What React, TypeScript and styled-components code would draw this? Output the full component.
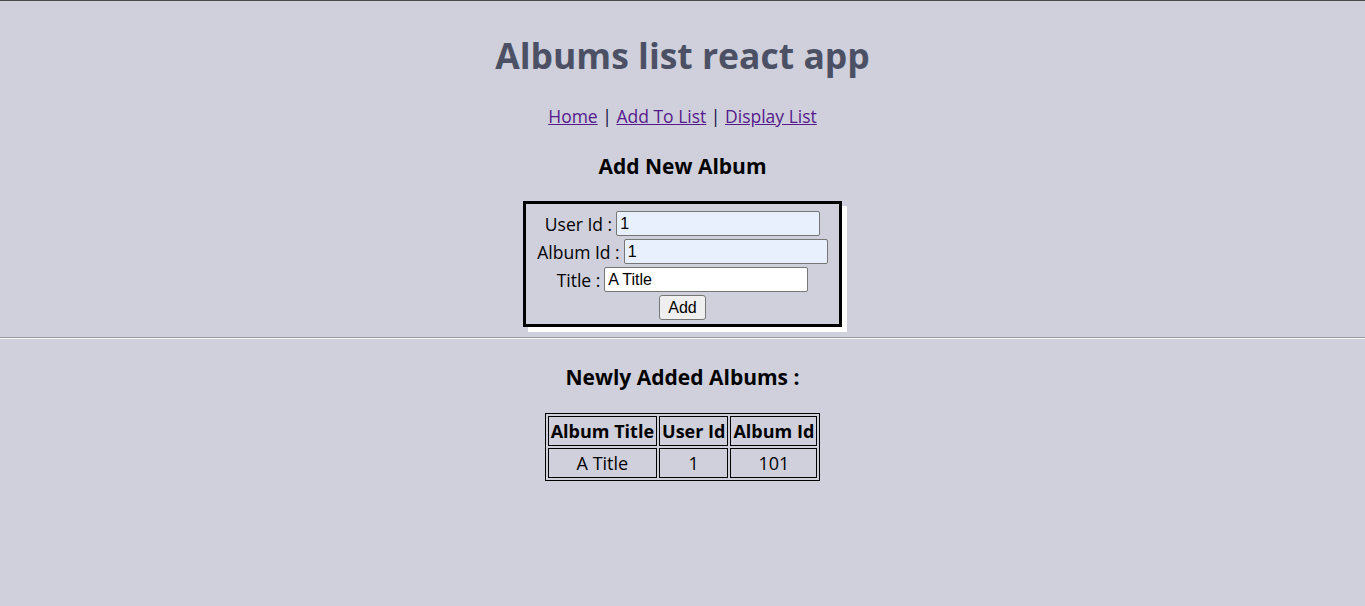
import styled, { createGlobalStyle } from 'styled-components';

const GlobalStyle = createGlobalStyle`
  html, body {
    margin: 0;
    padding: 0;
    background: #cfd0dc;
  }
  body {
    font-family: "Open Sans", "Noto Sans", sans-serif;
    color: #000;
  }
`;

const Page = styled.div`
  min-height: 606px;
  box-sizing: border-box;
  border-top: 1px solid #4a4a4a;
  display: flex;
  flex-direction: column;
  align-items: center;
`;

const Title = styled.h1`
  margin: 28px 0 0;
  font-size: 35.5px;
  line-height: 52px;
  font-weight: 700;
  color: #4b5065;
`;

const Nav = styled.nav`
  margin-top: 22px;
  font-size: 17.5px;
  line-height: 26px;
  color: #0b0b40;

  a {
    color: #551a8b;
    text-decoration: underline;
  }
`;

const SubHeading = styled.h3<{ $top: number }>`
  margin: ${p => p.$top}px 0 0;
  font-size: 21px;
  line-height: 28px;
  font-weight: 700;
`;

const FormBox = styled.form`
  margin-top: 21px;
  width: 319px;
  box-sizing: border-box;
  border: 3px solid #000;
  box-shadow: 5px 5px 0 #fff;
  padding: 7px 0 4px;
  display: flex;
  flex-direction: column;
  align-items: center;
  gap: 3px;
`;

const Row = styled.div`
  display: flex;
  align-items: center;
  justify-content: center;
  height: 25px;
  font-size: 17.5px;
  gap: 4px;
`;

const Input = styled.input<{ $filled?: boolean }>`
  width: 204px;
  height: 25px;
  box-sizing: border-box;
  border: 1px solid #767676;
  border-radius: 2px;
  padding: 1px 3px;
  font-family: "Liberation Sans", Arial, sans-serif;
  font-size: 16px;
  background: ${p => (p.$filled ? '#e8f0fe' : '#fff')};
  color: #000;
`;

const Button = styled.button`
  height: 25px;
  width: 47px;
  box-sizing: border-box;
  border: 1px solid #767676;
  border-radius: 3px;
  background: #efefef;
  font-family: "Liberation Sans", Arial, sans-serif;
  font-size: 16px;
  padding: 0;
`;

const Divider = styled.hr`
  width: 100%;
  margin: 10px 0 0;
  border: none;
  border-top: 1px solid #9a9a9a;
  border-bottom: 1px solid #f4f4f4;
`;

const Table = styled.table`
  margin-top: 22px;
  border: 1px solid #000;
  border-spacing: 2px;
  font-size: 18px;

  th, td {
    border: 1px solid #000;
    padding: 0 2px;
    height: 28px;
    text-align: center;
  }
`;

const albums = [{ title: 'A Title', userId: 1, id: 101 }];

export default function App() {
  return (
    <Page>
      <GlobalStyle />
      <Title>Albums list react app</Title>
      <Nav>
        <a href="#home">Home</a> | <a href="#add">Add To List</a> | <a href="#display">Display List</a>
      </Nav>
      <SubHeading $top={23}>Add New Album</SubHeading>
      <FormBox onSubmit={e => e.preventDefault()}>
        <Row>
          User Id : <Input $filled defaultValue="1" />
        </Row>
        <Row>
          Album Id : <Input $filled defaultValue="1" />
        </Row>
        <Row>
          Title : <Input defaultValue="A Title" />
        </Row>
        <Row>
          <Button type="submit">Add</Button>
        </Row>
      </FormBox>
      <Divider />
      <SubHeading $top={24}>Newly Added Albums :</SubHeading>
      <Table>
        <thead>
          <tr>
            <th>Album Title</th>
            <th>User Id</th>
            <th>Album Id</th>
          </tr>
        </thead>
        <tbody>
          {albums.map(a => (
            <tr key={a.id}>
              <td>{a.title}</td>
              <td>{a.userId}</td>
              <td>{a.id}</td>
            </tr>
          ))}
        </tbody>
      </Table>
    </Page>
  );
}
